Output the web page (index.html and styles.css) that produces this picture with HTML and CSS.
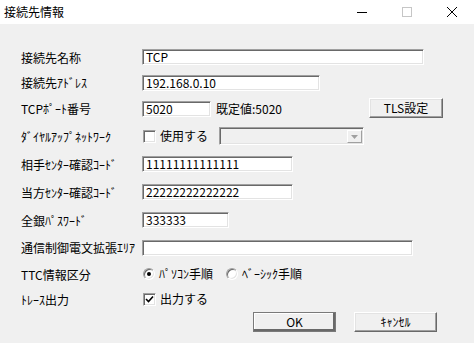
FILE: index.html
```html
<!DOCTYPE html>
<html lang="ja">
<head>
<meta charset="utf-8">
<title>接続先情報</title>
<link rel="stylesheet" href="styles.css">
</head>
<body>
<div class="window">
  <div class="titlebar">
    <span class="title">接続先情報</span>
    <div class="caption">
      <span class="cap-btn">
        <svg width="10" height="10" viewBox="0 0 10 10"><path d="M0 5.5H10" stroke="#000" stroke-width="1"/></svg>
      </span>
      <span class="cap-btn">
        <svg width="10" height="10" viewBox="0 0 10 10"><rect x="0.5" y="0.5" width="9" height="9" fill="none" stroke="#c6c6c6" stroke-width="1"/></svg>
      </span>
      <span class="cap-btn">
        <svg width="10" height="10" viewBox="0 0 10 10"><path d="M0 0L10 10M10 0L0 10" stroke="#000" stroke-width="1"/></svg>
      </span>
    </div>
  </div>

  <div class="form">
    <div class="label">接続先名称</div>
    <div class="field"><div class="edit w-name">TCP</div></div>

    <div class="label">接続先ｱﾄﾞﾚｽ</div>
    <div class="field"><div class="edit w-addr">192.168.0.10</div></div>

    <div class="label">TCPﾎﾟｰﾄ番号</div>
    <div class="field">
      <div class="edit w-port">5020</div>
      <span class="note">既定値:5020</span>
      <div class="button tls">TLS設定</div>
    </div>

    <div class="label">ﾀﾞｲﾔﾙｱｯﾌﾟﾈｯﾄﾜｰｸ</div>
    <div class="field">
      <span class="check"></span>
      <span class="opt">使用する</span>
      <div class="combo">
        <span class="combo-btn">
          <svg width="7" height="4" viewBox="0 0 7 4"><path d="M0 0H7L3.5 4Z" fill="#a0a0a0"/></svg>
        </span>
      </div>
    </div>

    <div class="label">相手ｾﾝﾀｰ確認ｺｰﾄﾞ</div>
    <div class="field"><div class="edit w-code">11111111111111</div></div>

    <div class="label">当方ｾﾝﾀｰ確認ｺｰﾄﾞ</div>
    <div class="field"><div class="edit w-code">22222222222222</div></div>

    <div class="label">全銀ﾊﾟｽﾜｰﾄﾞ</div>
    <div class="field"><div class="edit w-pass">333333</div></div>

    <div class="label">通信制御電文拡張ｴﾘｱ</div>
    <div class="field"><div class="edit w-ext"></div></div>

    <div class="label">TTC情報区分</div>
    <div class="field">
      <span class="radio on"></span>
      <span class="opt">ﾊﾟｿｺﾝ手順</span>
      <span class="radio second"></span>
      <span class="opt">ﾍﾞｰｼｯｸ手順</span>
    </div>

    <div class="label">ﾄﾚｰｽ出力</div>
    <div class="field">
      <span class="check">
        <svg width="9" height="9" viewBox="0 0 9 9"><path d="M1 4L3.5 6.5L8 1.5" fill="none" stroke="#000" stroke-width="1.6"/></svg>
      </span>
      <span class="opt">出力する</span>
    </div>
  </div>

  <div class="actions">
    <div class="button default">OK</div>
    <div class="button">ｷｬﾝｾﾙ</div>
  </div>
</div>
</body>
</html>
```

FILE: styles.css
```css
html, body
{
  margin: 0;
  padding: 0;
}
body
{
  width: 474px;
  height: 343px;
  overflow: hidden;
  background: #f0f0f0;
  font-family: "Noto Sans CJK JP", "Liberation Sans", sans-serif;
  font-size: 12px;
  color: #000;
}
.window
{
  height: 343px;
  background: #f0f0f0;
}

/* title bar */
.titlebar
{
  height: 24px;
  background: #fff;
  display: flex;
  align-items: center;
  justify-content: space-between;
}
.title
{
  padding-left: 4px;
  line-height: 12px;
}
.caption
{
  display: flex;
  height: 24px;
}
.cap-btn
{
  width: 45px;
  display: flex;
  align-items: center;
  justify-content: center;
}

/* form grid: label column, then controls */
.form
{
  display: grid;
  grid-template-columns: 121px 1fr;
  grid-template-rows: 26px 25px 27px 28px 28px 28px 28px 27px 26px 24px;
  padding: 20px 31px 0 21px;
}
.label, .field
{
  display: flex;
  align-items: center;
  white-space: nowrap;
  line-height: 12px;
}
.label
{
  padding-top: 1px;
}

/* sunken edit box */
.edit
{
  box-sizing: border-box;
  height: 16px;
  background: #fff;
  border: 1px solid;
  border-color: #a0a0a0 #fff #fff #a0a0a0;
  box-shadow: inset 1px 1px 0 #696969, inset -1px -1px 0 #e3e3e3;
  padding: 1px 0 0 3px;
  line-height: 12px;
  overflow: hidden;
}
.w-name { width: 282px; }
.w-addr { width: 178px; }
.w-port { width: 69px; }
.w-code { width: 151px; }
.w-pass { width: 87px; }
.w-ext  { width: 271px; }

.note
{
  margin-left: 5px;
}

/* raised push buttons */
.button
{
  box-sizing: border-box;
  height: 20px;
  background: #f0f0f0;
  border: 1px solid;
  border-color: #fff #696969 #696969 #fff;
  box-shadow: inset -1px -1px 0 #a0a0a0, inset 1px 1px 0 #e3e3e3;
  display: flex;
  align-items: center;
  justify-content: center;
  line-height: 12px;
}
.tls
{
  width: 74px;
  margin-left: auto;
  margin-top: -1px;
}

/* checkbox and radio */
.check
{
  box-sizing: border-box;
  width: 13px;
  height: 13px;
  margin-left: 1px;
  background: #fff;
  border: 1px solid;
  border-color: #a0a0a0 #fff #fff #a0a0a0;
  box-shadow: inset 1px 1px 0 #696969, inset -1px -1px 0 #e3e3e3;
  display: flex;
  align-items: center;
  justify-content: center;
}
.radio
{
  box-sizing: border-box;
  width: 12px;
  height: 12px;
  margin-left: 1px;
  border-radius: 50%;
  background: #fff;
  border: 1px solid;
  border-color: #a0a0a0 #fff #fff #a0a0a0;
  box-shadow: inset 1px 1px 0 #696969, inset -1px -1px 0 #e3e3e3;
  position: relative;
}
.radio.on::after
{
  content: "";
  position: absolute;
  left: 3px;
  top: 3px;
  width: 4px;
  height: 4px;
  border-radius: 50%;
  background: #000;
}
.radio.second
{
  margin-left: 13px;
}
.opt
{
  margin-left: 4px;
}

/* disabled combo box */
.combo
{
  box-sizing: border-box;
  width: 145px;
  height: 18px;
  margin-left: 11px;
  background: #f0f0f0;
  border: 1px solid;
  border-color: #a0a0a0 #fff #fff #a0a0a0;
  box-shadow: inset 1px 1px 0 #696969, inset -1px -1px 0 #e3e3e3;
  display: flex;
  justify-content: flex-end;
  padding: 2px 1px 1px 2px;
}
.combo-btn
{
  box-sizing: border-box;
  width: 15px;
  height: 13px;
  background: #f0f0f0;
  border: 1px solid;
  border-color: #fff #a0a0a0 #a0a0a0 #fff;
  display: flex;
  align-items: center;
  justify-content: center;
}

/* OK / cancel */
.actions
{
  display: flex;
  gap: 18px;
  padding: 1px 0 0 253px;
}
.actions .button
{
  width: 83px;
}
.button.default
{
  border-color: #fff #646464 #646464 #fff;
  outline: 1px solid #7a7a7a;
  outline-offset: -1px;
  box-shadow: inset -2px -2px 0 #696969, inset 1px 1px 0 #fff;
}
```
